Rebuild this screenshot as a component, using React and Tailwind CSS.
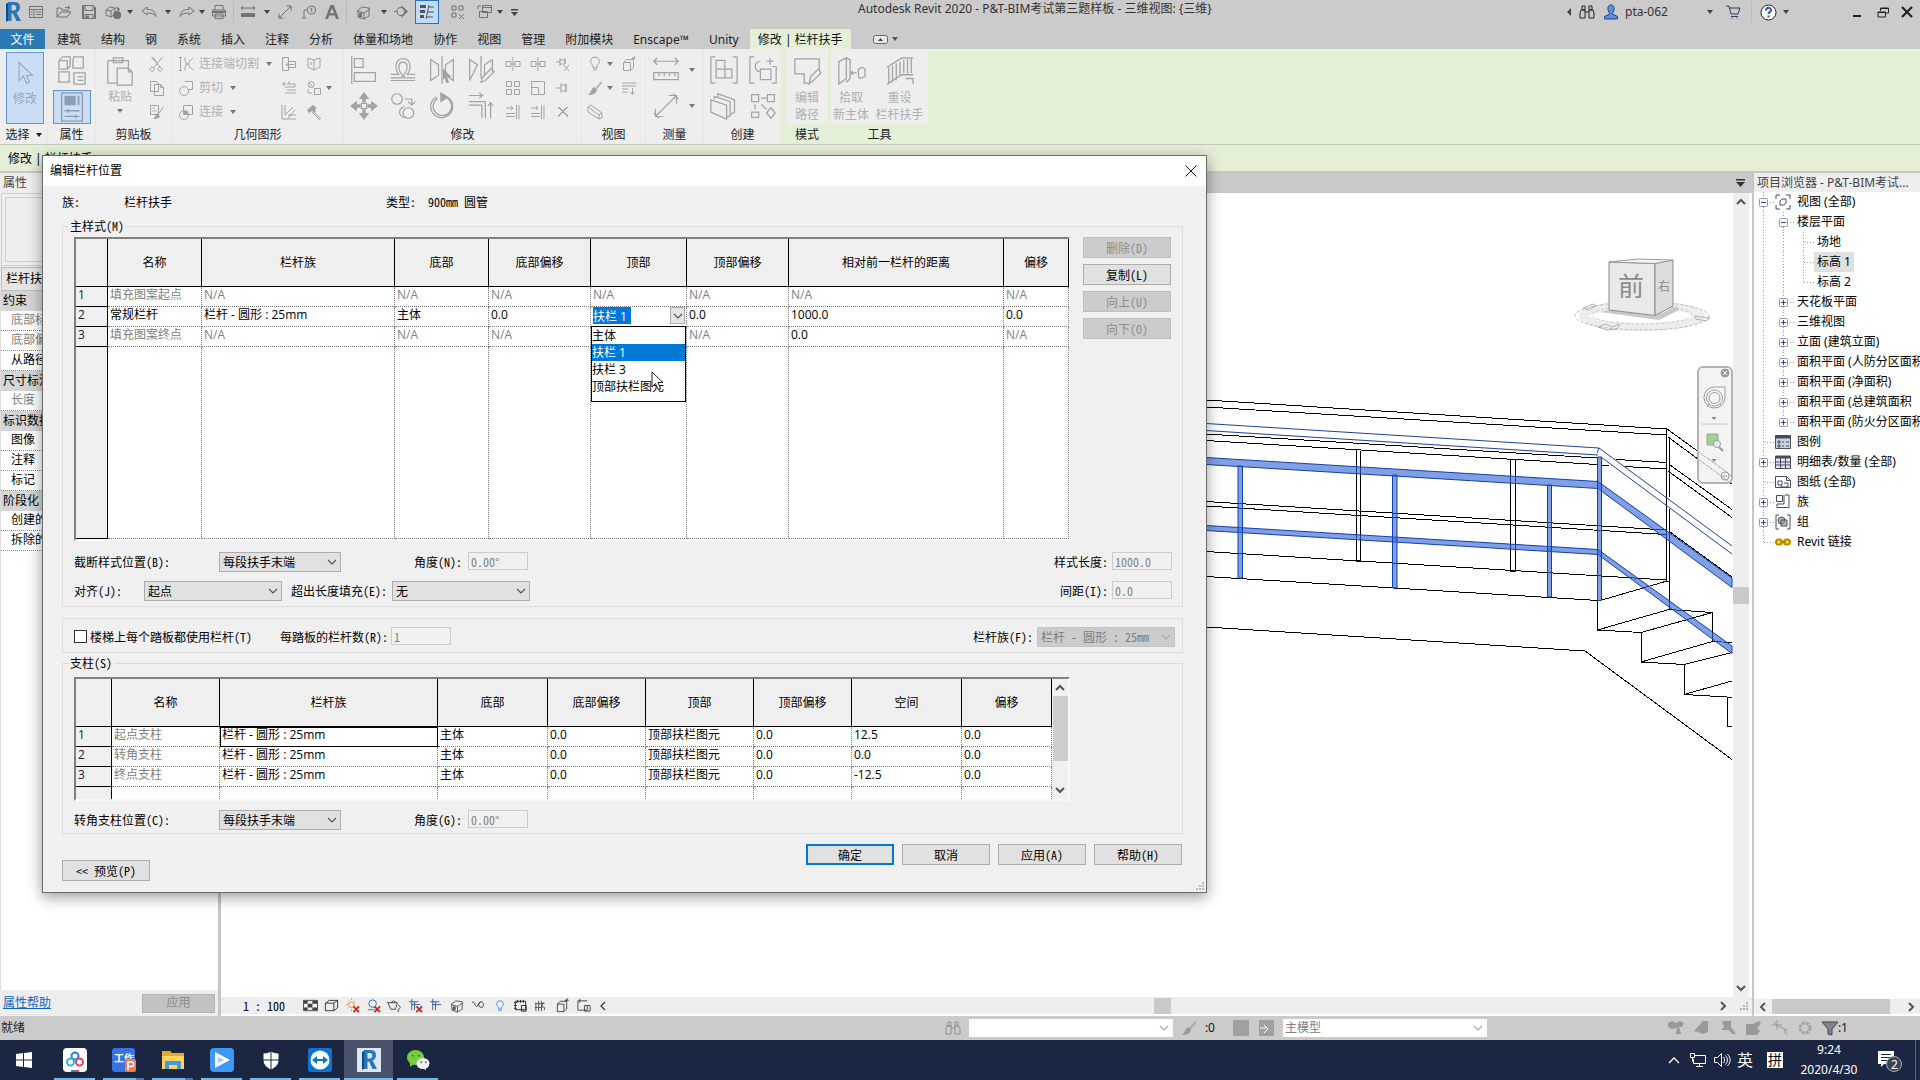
import { useState } from 'react';

// ── Icon outlines, all on a 16px grid: s = stroked, f = filled ───────────────
const ICONS = {
  list:     { s: 'M1.5 2.5h13v11h-13zM1.5 5.5h13M6 5.5v8M8 8h5M8 10.5h5M3 8h1.5M3 10.5h1.5' },
  open:     { s: 'M1 13V4h4l1 2h6v2M1 13l4-5h10l-4 5zM9 3.500h4M12 2l2 1.500L12 5' },
  save:     { s: 'M1.500 1.500h11l2 2v11h-13zM4 1.500v5h8v-5M4 14.500v-4h8v4M1.500 1.500v13M2.500 2v12M13.500 3v11', f: 'M5 11.500h3v3H5z' },
  sync:     { s: 'M1 6l4-3 5 1v6l-4 3-5-2zM1 6l5 1 4-3M6 7v6', f: 'M12 7a4 4 0 1 0 .1 8 4 4 0 0 0 0-8zM11 2l4 3-2 3z' },
  undo:     { s: 'M1 7l5-4v2.500c5 0 8 1 9 7-2-3-5-3.500-9-3.500V11z' },
  redo:     { s: 'M15 7l-5-4v2.500c-5 0-8 1-9 7 2-3 5-3.500 9-3.500V11z' },
  print:    { s: 'M4 6V1.500h8V6M1.500 6h13v6h-13zM4 10h8v4.500H4z', f: 'M2 7h12v2H2z' },
  measure:  { s: 'M1 4h14M3 2L1 4l2 2M13 2l2 2-2 2', f: 'M1 9h14v4H1z' },
  diag:     { s: 'M2 14L14 2M9.500 2H14v4.500M2 9.500V14h4.500M1 12l3 3M12 1l3 3' },
  tag:      { s: 'M10.500 2a4 4 0 1 0 .1 8 4 4 0 0 0 0-8zM9.500 5l1.200-1v4M6.500 6H3v8M1 14h4' },
  textA:    { f: 'M6.500 1h3.200L15 15h-3l-1.200-3.500H5.200L4 15H1zM8 4l-2 5.200h4z' },
  house:    { s: 'M1 7l5-4 7 1v8l-5 3-6-2V7M1 7l7 2 6-4M8 9v6', f: 'M3 9h3v4H3z' },
  section:  { s: 'M8 3.500a4 4 0 1 0 .1 8 4 4 0 0 0 0-8zM1 7.500h3', f: 'M8 1l7 6.500L8 14l1-3c3-2 3-5 0-7z' },
  thin:     { s: 'M10 1L7 15M10 3h5M9 8h6M8 13h6', f: 'M1 1h6v3H1zM1 6h5v3H1zM1 11h4v3H1z' },
  closeWin: { s: 'M2 2h4v4H2zM9 2h4v4H9zM2 9h4v4H2zM9 10l5 5M14 10l-5 5' },
  switchWin:{ s: 'M5.500 1.500h9v7h-9zM5.500 3.500h9M2.500 7.500h8v6h-8zM1 5V2h3' },
  pointer:  { s: 'M4 1v12l3-3 2 5 2-1-2-4.500h4z' },
  cut:      { s: 'M2.500 1l9 11M13.500 1l-9 11M3.500 1l4.500 5.500M4 11.500a2 2 0 1 0 .1 3.500 2 2 0 0 0 0-3.500M12 11.500a2 2 0 1 0 .1 3.500 2 2 0 0 0 0-3.500' },
  copy:     { s: 'M1.500 1.500h6l2 2v8h-8zM5.500 4.500h6l3 3v8h-9zM11.500 4.500v3h3' },
  brush:    { s: 'M1.500 1.500h8v9h-8zM3.500 4h2M3.500 7h4M14.500 3L10 9', f: 'M8 9l3 3c-1 3-4 3-7 3 2-1 2-4 4-6z' },
  paintbrush:{ s: 'M14.500 1.500L8 9M15 2.500L9 9.500', f: 'M7 7l3 3c-1 4-5 5-9 5 3-2 3-6 6-8z' },
  cope:     { s: 'M1 1.500h3M1 14.500h3M2.500 1.500v13M7 1.500v4l3 2.500-3 2.500v4M15 2L9 8l6 6M12 8h-5' },
  joinCut:  { s: 'M6.500 1.500h8v8h-4M6 6.500a4.500 4.500 0 1 0 .1 9 4.500 4.500 0 0 0 0-9z' },
  join:     { s: 'M5.500 1.500h9v9h-9zM6 6.500a4.500 4.500 0 1 0 .1 9 4.500 4.500 0 0 0 0-9z', f: 'M6 7h4v4H6z' },
  wallOpen: { s: 'M1.500 1.500h6v13h-6zM7.500 5.500h7v6h-7M13 8.500H5l2-2M5 8.500l2 2' },
  box:      { s: 'M2 2l6 2v10l-6-3zM8 4l6-2v9l-6 3M5 6v3' },
  beam:     { s: 'M1 4h4M3 2v4M6 4h8v3H4M6 10h9M4 13h11M8 1v3' },
  swap:     { s: 'M5 1.500a3 3 0 1 0 .1 6 3 3 0 0 0 0-6zM3 3l4 4M8.500 8.500h6v6h-6zM2 9v4h4' },
  sawtooth: { s: 'M1 1v14h14M4 1v10l8-8M7 11h8M7 14L14 6' },
  hammer:   { s: 'M7 7l8 8M6 8l8 8', f: 'M1 6l6-5 4 3-2 1 1 2-2 2-2-2-3 2z' },
  align:    { s: 'M1 0v16M2.500 1.500h5v5h-5zM2.500 9.500h12v5h-12z' },
  offset:   { s: 'M1 14h14M1 10.500h4.500C3 7 3.500 1.500 8 1.500s5 5.500 2.500 9H15M1 12.500h6.500v-2C5 8 5 3.500 8 3.500s3 4.500.5 7v2H15' },
  mirror:   { s: 'M1.500 2v12L6 11V5zM14.500 2v12L10 11V5zM8 0v16', f: 'M8.500 7l5 5H11l1 3-1.500.5-1-3-1 1.500z' },
  mirrorDraw:{ s: 'M1.500 2v12L6 5zM14.500 2v7M14.500 2L10 5v6M8 0v13M8 15l1-3 5-5 1.500 2-5 5z' },
  moveX:    { s: 'M6.500 6.500h3v3h-3z', f: 'M8 0l3 4H9v2H7V4H5zM8 16l3-4H9v-2H7v2H5zM0 8l4-3v2h2v2H4v2zM16 8l-4-3v2h-2v2h2v2z' },
  copyO:    { s: 'M4.500 1a3 3 0 1 0 .1 6 3 3 0 0 0 0-6zM11 9a3 3 0 1 0 .1 6 3 3 0 0 0 0-6zM9 4h4v3M11 5.500l2 2 2-2M9 8.500a3 3 0 1 0 .1 6' },
  rotate:   { s: 'M5 2.700A6.300 6.300 0 1 0 11.500 3.200M5.500 3.600a5.300 5.300 0 1 0 5.500 0', f: 'M7 0l5 3-5 3z' },
  trim:     { s: 'M1 2h8M7 .5L9 2 7 3.500M1 5.500h9.500V15M1 7.500h7.500V15M13.500 15V6M12 8l1.500-2L15 8' },
  split:    { s: 'M1 5.500h5v5H1zM10 5.500h5v5h-5zM8 1v14M6 8h4' },
  array:    { s: 'M1.500 1.500h5v5h-5zM9.500 1.500h5v5h-5zM1.500 9.500h5v5h-5zM9.500 9.500h5v5h-5z' },
  scale:    { s: 'M1.500 1.500h13v13h-13zM1.500 7.500h7v7' },
  pin:      { s: 'M1 8h5M6 3.500v9M6 5h5v6H6M11 3.500v9' },
  unpin:    { s: 'M1 6h4M5 2v8M5 4h5v4H5M10 2v6M9 9l5 6M14 9l-5 6' },
  trimOne:  { s: 'M1 4h7M6 2l2 2-2 2M1 9.500h9M1 12.500h9M11.500 1v14M14 1v14' },
  x:        { s: 'M3 3l10 10M13 3L3 13M4 3l9 9M3 12l9-9' },
  bulb:     { s: 'M8 1a4.500 4.500 0 0 0-2 8.500V12h4V9.500A4.500 4.500 0 0 0 8 1zM6 14h4' },
  explode:  { s: 'M2.500 6.500h7v8h-7zM2.500 6.500l3-3h7v8l-3 3M12 1v3M10.500 2.500h4M14 0l-3 4' },
  lines:    { s: 'M1 3h14M1 6h14M1 9h6M1 12h6M11.500 8v6M9.500 12l2 2.500 2-2.500' },
  slab:     { s: 'M1 3l3-2 11 8v5l-3 1L1 8zM1 3l11 8v4M12 11l3-2' },
  dims:     { s: 'M1 3h14M3 1L1 3l2 2M13 1l2 2-2 2M1 9.500h14v4H1zM4 9.500v2M7 9.500v2M10 9.500v2M13 9.500v2' },
  group:    { s: 'M3 .5H.5v15H3M13 .5h2.500v15H13M3.500 2.500h5v5h4v5h-9zM3.500 7.500h5v5' },
  assembly: { s: 'M3 .5H.5v15H3M13 6h2.500v9.500H13M6.500 3a3 3 0 1 0 .1 6M6.500 7.500h6v6h-6zM12 1v4M10 3h4' },
  parts:    { s: 'M.5 4.500l9 3v8l-9-4zM2.500 4V2.500l9 3v8l-2 1M4.500 3V1l9.500 3.500v7l-2.500 1.500' },
  similar:  { s: 'M1.500 1.500h4v4h-4zM10.500 1.500h4v4h-4zM1.500 11.500h4v3h-4zM7 3.500h3M3.500 7v3M7 7l3 3M12.500 9l2.500 3-2.500 3-2.500-3z' },
  editPath: { s: 'M1.500 1.500h13v6M1.500 1.500v8h5v5h2M9 15l1-4 4-4 1.500 2-4 4z' },
  pickHost: { s: 'M1.500 3l4-2v11l-4 3zM5.500 1l2 1v10l-2 2M14 6l1.500 1v4l-2.500 1-1-1V7zM11 9H8l1-1M8 9l1 1' },
  railing:  { s: 'M1 6l8-5h6M2 6v9M4 5v9M6 4v9M8 3v8M10 2v7M12 1.500v8M14 1v8M1 15l8-5h6M11 12h4v3' },
  wall:     { s: 'M1 3l2-2h4v5L5.500 7.500H1zM1 3h4.500v4.500M9 1h5v6H8.500V3zM1 9h5.500v5.500H1zM9 9.500h6v6H9zM11 11.500h3M11 13.500h3' },
  props:    { s: 'M2.500.5h11v15h-11zM4 10h8M4 13h8M6 9v2M10 12v2', f: 'M4 2h6v5H4zM11 2h1v5h-1z' },
  clipboard:{ s: 'M1.500 2.500h11V6M1.500 2.500v12h5M4.500 1h5v2.500h-5zM6.500 6.500h6l2 2v7h-8zM12.500 6.500v2h2' },
  cube:     { s: 'M1.500 5.500h9v8h-9zM1.500 5.500l4-3h9l-4 3M14.500 2.500v8l-4 3' },
  sun:      { s: 'M7 4a3 3 0 1 0 .1 6 3 3 0 0 0 0-6M7 0v2M1 7h2M3 3l1 1M3 11l1-1M11 3l-1 1M7 12v2' },
  shadow:   { s: 'M7 2a4 4 0 1 0 .1 8 4 4 0 0 0 0-8M2 12.500h7' },
  teapot:   { s: 'M1 5l3 7h5l2-7zM4 5l3-2 3 2M1 5H0M12 8a2 2 0 1 1 0 4v3' },
  crop:     { s: 'M1 4h10M4 1v12M7 4v9M4 7h9' },
  glasses:  { s: 'M1 5c3-3 3 4 5 4s2-5 5-5 3 6 0 6-4-4-1-6' },
  region:   { s: 'M2.500 3.500h11v9h-11z M1 5h3M1 8h3M1 11h3M5 2v3M8 2v3M11 2v3M9 8h5v6H9z' },
  grid:     { s: 'M2 5v9M5 3v11M8 3v11M1 6h10M1 10h8M11 5a2 2 0 1 0 .1 5v3' },
  square:   { s: 'M2 3h10M2 3v10h10M4 1v4M12 8v5M9 8h6v6H9z' },
  checker:  { s: 'M.5 2.500h15v11H.5z', f: 'M1 3h4v3H1zM10 3h5v3h-5zM5 6h5v4H5zM1 10h4v3H1zM10 10h5v3h-5z' },
  bino:     { s: 'M2 6h4v8H1V9zM10 6h4l1 3v5h-5zM6 8h4M3 2h3v4H3zM10 2h3v4h-3z' },
  cart:     { s: 'M1 2h3l2 8h7l2-6H5M6 12.500h7M7 13.500v1M12 13.500v1' },
};

function Icon({ name, size = 16, className = 'text-[#a3a3a3]', off = false }) {
  const { s, f } = ICONS[name];
  return (
    <svg width={size} height={size} viewBox="0 0 16 16" className={`shrink-0 ${className}`} aria-hidden="true">
      {f && <path d={f} fill="currentColor" fillRule="evenodd" />}
      {s && <path d={s} fill="none" stroke="currentColor" strokeWidth={size > 20 ? 0.7 : 1} />}
      {off && <path d="M9 9l6 6M15 9l-6 6" stroke="#c8281e" strokeWidth="2" />}
    </svg>
  );
}

function Caret({ className = 'text-[#555]' }) {
  return (
    <svg width="6" height="4" viewBox="0 0 6 4" className={`shrink-0 ${className}`} aria-hidden="true">
      <path d="M0 0h6L3 4z" fill="currentColor" />
    </svg>
  );
}

function Chevron({ dir = 'down', className = 'text-[#555]', bold = false }) {
  const d = { down: 'M1 3l4 4 4-4', up: 'M1 7l4-4 4 4', left: 'M7 1L3 5l4 4', right: 'M3 1l4 4-4 4' }[dir];
  return (
    <svg width="10" height="10" viewBox="0 0 10 10" className={`shrink-0 ${className}`} aria-hidden="true">
      <path d={d} fill="none" stroke="currentColor" strokeWidth={bold ? 2 : 1.2} />
    </svg>
  );
}

function RevitLogo({ className = 'w-4 h-5' }) {
  return (
    <svg viewBox="0 0 16 20" className={className} aria-label="Revit">
      <path d="M1 2l3-2v18l-3 2z" fill="#134a86" />
      <path fillRule="evenodd" d="M3 0h7c4 0 5 3 5 5.500 0 3-2 4.500-3.500 5L16 19h-4.500L8 11.500H6.500V19H3zM6.500 3v5.500H9c3 0 3-5.500 0-5.500z" fill="#2b76b9" />
    </svg>
  );
}

// ── Title bar ────────────────────────────────────────────────────────────────
function Tool({ name, w = 'w-6', size = 16 }) {
  return (
    <button aria-label={name} className={`${w} h-6 flex items-center justify-center`}>
      <Icon name={name} size={size} className="text-[#737373]" />
    </button>
  );
}

function TitleBar() {
  return (
    <header className="h-[29px] bg-[#cbcbcb] flex items-start justify-between relative">
      <div className="flex items-center h-6 pl-[5px]">
        <RevitLogo />
        <Tool name="list" w="w-[30px]" />
        <Tool name="open" w="w-[26px]" />
        <Tool name="save" />
        <Tool name="sync" />
        <Caret className="ml-0.5 mr-1 text-[#444]" />
        <Tool name="undo" />
        <Caret className="mx-1 text-[#444]" />
        <Tool name="redo" />
        <Caret className="text-[#444]" />
        <Tool name="print" w="w-7" />
        <span className="w-px h-5 bg-[#b8b8b8]" />
        <Tool name="measure" w="w-7" />
        <Caret className="ml-0.5 text-[#444]" />
        <Tool name="diag" w="w-[30px]" />
        <Tool name="tag" w="w-[18px]" />
        <Tool name="textA" w="w-7" />
        <span className="w-px h-5 bg-[#b8b8b8]" />
        <Tool name="house" w="w-[34px]" />
        <Caret className="text-[#444]" />
        <Tool name="section" w="w-7" />
        <button aria-label="细线" className="w-6 h-6 border border-[#2f6fc0] bg-[#c2dcf7] flex items-center justify-center">
          <Icon name="thin" className="text-[#555]" />
        </button>
        <Tool name="closeWin" w="w-[38px]" />
        <Tool name="switchWin" w="w-4" />
        <Caret className="ml-1 mr-2 text-[#444]" />
        <svg width="7" height="7" viewBox="0 0 7 7"><path d="M0 0h7v1.500H0zM0 3h7L3.500 7z" fill="#444" /></svg>
      </div>
      <div className="absolute left-1/2 top-0 -ml-[102px] leading-[18px] whitespace-nowrap text-[#333]">
        Autodesk Revit 2020 - P&amp;T-BIM考试第三题样板 - 三维视图: {'{三维}'}
      </div>
      <div className="flex items-center h-6 text-[#444]">
        <svg width="4" height="8" viewBox="0 0 4 8" className="mr-2"><path d="M4 0v8L0 4z" fill="#444" /></svg>
        <Icon name="bino" className="text-[#222] mr-2" />
        <svg width="16" height="16" viewBox="0 0 16 16" className="mr-1.5">
          <path d="M8 1c2.500 0 3.500 2 3 4.500S9.500 9 9.500 10l5 2.500V15h-13v-2.500l5-2.500c0-1-1-2-1.500-4.500S5.500 1 8 1z" fill="#5d8fe0" stroke="#27457f" />
        </svg>
        <span className="w-[82px] text-[#333]">pta-062</span>
        <Caret className="mr-3" />
        <Icon name="cart" className="text-[#2b3d66] mr-2.5" />
        <span className="w-px h-5 bg-[#bbb] mr-2" />
        <svg width="17" height="17" viewBox="0 0 17 17" className="mr-1.5">
          <circle cx="8.500" cy="8.500" r="7.500" fill="#fff" stroke="#222" />
          <path d="M6 6.500c0-4 5.500-3 5 0-.3 1.500-2.500 1.500-2.500 3.500M8.500 11.500v2" fill="none" stroke="#2957b5" strokeWidth="2" />
        </svg>
        <Caret className="mr-[63px]" />
        <button aria-label="最小化" className="w-[25px] h-6 flex items-center">
          <svg width="10" height="10" viewBox="0 0 10 10"><path d="M1 9h8" stroke="#222" strokeWidth="2" /></svg>
        </button>
        <button aria-label="还原" className="w-6 h-6 flex items-center">
          <svg width="12" height="11" viewBox="0 0 12 11"><path d="M3.500 4V1h8v5H9M1 5h7.500v5H1zM1 5.500h7.500M3.500 1.500h8" fill="none" stroke="#222" /></svg>
        </button>
        <button aria-label="关闭" className="w-[19px] h-6 flex items-center">
          <svg width="12" height="12" viewBox="0 0 12 12"><path d="M1 1l10 10M11 1L1 11" stroke="#222" strokeWidth="2.200" /></svg>
        </button>
      </div>
    </header>
  );
}

// ── Ribbon ───────────────────────────────────────────────────────────────────
const TABS = ['建筑', '结构', '钢', '系统', '插入', '注释', '分析', '体量和场地', '协作', '视图', '管理', '附加模块', 'Enscape™', 'Unity'];

function TabRow() {
  return (
    <nav className="h-5 bg-[#cbcbcb] flex items-stretch leading-[22px] text-[#222]">
      <button className="w-[45px] bg-[#2a7ab5] text-white mr-0.5">文件</button>
      {TABS.map(t => <button key={t} className="px-2.5 whitespace-nowrap">{t}</button>)}
      <button className="w-[101px] bg-[#e4efd7] text-[#111] whitespace-nowrap ml-px">修改 | 栏杆扶手</button>
      <button aria-label="最小化功能区" className="ml-[22px] flex items-center gap-1">
        <svg width="15" height="9" viewBox="0 0 15 9"><rect x=".5" y=".5" width="14" height="8" rx="2" fill="#e8e8e8" stroke="#666" /><path d="M5 6l2.500-3L10 6z" fill="#444" /></svg>
        <Caret />
      </button>
    </nav>
  );
}

function Panel({ title, w, green = false, children }) {
  return (
    <section className={`${w} h-full flex flex-col shrink-0 ${green ? '' : 'bg-[#eeeeee] border-r border-[#e6e9e2]'}`}>
      <div className={`h-[75px] pt-[3px] flex ${green ? 'bg-[#eeeeee]' : ''}`}>{children}</div>
      <h2 className="flex-1 text-center leading-[22px] text-[#222] whitespace-nowrap">{title}</h2>
    </section>
  );
}

function Stack({ names, w = 'w-[25px]' }) {
  return (
    <div className={`${w} shrink-0 grid grid-rows-3`}>
      {names.map((n, i) => n
        ? <button key={i} disabled aria-label={n} className="h-6 flex items-center justify-center"><Icon name={n} /></button>
        : <span key={i} />)}
    </div>
  );
}

function Pair({ names, w = 'w-[39px]' }) {
  return (
    <div className={`${w} shrink-0 grid grid-rows-2`}>
      {names.map(n => (
        <button key={n} disabled aria-label={n} className="h-9 flex items-center justify-center"><Icon name={n} size={28} /></button>
      ))}
    </div>
  );
}

function BigButton({ name, lines, w }) {
  return (
    <button disabled className={`${w} h-[72px] pt-1 flex flex-col items-center text-[#b0b0b0] leading-[17px] whitespace-nowrap`}>
      <Icon name={name} size={30} className="mb-[3px] text-[#a3a3a3]" />
      {lines.map(l => <span key={l}>{l}</span>)}
    </button>
  );
}

function Ribbon() {
  return (
    <div className="h-24 bg-[#e4efd7] border-b border-[#c3cbbb] flex items-stretch">
      <Panel w="w-12" title={<span className="inline-flex items-center gap-1.5">选择<Caret className="text-[#222]" /></span>}>
        <button className="ml-1.5 w-[38px] h-[72px] border border-[#6495d3] bg-[#c9def5] flex flex-col items-center pt-2 gap-1.5 text-[#9aa6b5]">
          <Icon name="pointer" size={24} className="text-[#96a3b5]" />
          修改
        </button>
      </Panel>
      <Panel w="w-12" title="属性">
        <div className="w-full flex flex-col items-center gap-0.5">
          <button disabled aria-label="类型属性" className="h-9 flex items-center"><Icon name="wall" size={30} /></button>
          <button aria-label="属性" className="w-[38px] h-[34px] border border-[#6495d3] bg-[#c9def5] flex items-center justify-center">
            <Icon name="props" size={30} className="text-[#8d9cb0]" />
          </button>
        </div>
      </Panel>
      <Panel w="w-[76px]" title="剪贴板">
        <button disabled className="w-12 pt-1 flex flex-col items-center text-[#b0b0b0] leading-[17px]">
          <Icon name="clipboard" size={30} className="mb-0.5 text-[#a3a3a3]" />
          粘贴
          <Caret className="mt-1 text-[#777]" />
        </button>
        <Stack names={['cut', 'copy', 'brush']} />
      </Panel>
      <Panel w="w-[172px]" title="几何图形">
        <div className="w-[104px] grid grid-rows-3 text-[#b0b0b0]">
          {[['cope', '连接端切割'], ['joinCut', '剪切'], ['join', '连接']].map(([icon, text]) => (
            <button key={text} disabled className="h-6 pl-1.5 flex items-center gap-[5px] whitespace-nowrap">
              <Icon name={icon} />{text}<Caret className="ml-0.5 text-[#777]" />
            </button>
          ))}
        </div>
        <Stack names={['wallOpen', 'beam', 'sawtooth']} />
        <Stack names={['box', 'swap', 'hammer']} />
        <Caret className="mt-[34px] text-[#777]" />
      </Panel>
      <Panel w="w-[238px]" title="修改">
        <Pair names={['align', 'moveX']} />
        <Pair names={['offset', 'copyO']} />
        <Pair names={['mirror', 'rotate']} />
        <Pair names={['mirrorDraw', 'trim']} />
        <Stack names={['split', 'array', 'trimOne']} />
        <Stack names={['split', 'scale', 'trimOne']} />
        <Stack names={['unpin', 'pin', 'x']} />
      </Panel>
      <Panel w="w-16" title="视图">
        <Stack names={['bulb', 'paintbrush', 'slab']} />
        <div className="w-2 grid grid-rows-3 items-center justify-items-center">
          <Caret className="text-[#777]" /><Caret className="text-[#777]" />
        </div>
        <Stack names={['explode', 'lines', null]} w="w-8" />
      </Panel>
      <Panel w="w-[58px]" title="测量">
        <Pair names={['dims', 'diag']} />
        <div className="ml-1 grid grid-rows-2 items-center"><Caret className="text-[#777]" /><Caret className="text-[#777]" /></div>
      </Panel>
      <Panel w="w-[78px]" title="创建">
        <Pair names={['group', 'parts']} />
        <Pair names={['assembly', 'similar']} />
      </Panel>
      <div className="w-1" />
      <Panel w="w-[42px]" green title="模式">
        <BigButton name="editPath" lines={['编辑', '路径']} w="w-[42px]" />
      </Panel>
      <div className="w-[3px]" />
      <Panel w="w-[97px]" green title="工具">
        <BigButton name="pickHost" lines={['拾取', '新主体']} w="w-10" />
        <BigButton name="railing" lines={['重设', '栏杆扶手']} w="w-[57px]" />
      </Panel>
    </div>
  );
}

// ── Properties palette ───────────────────────────────────────────────────────
const PROPS = [
  { group: '约束' },
  { name: '底部标高', dim: true },
  { name: '底部偏移', dim: true },
  { name: '从路径偏移' },
  { group: '尺寸标注' },
  { name: '长度', dim: true },
  { group: '标识数据' },
  { name: '图像' },
  { name: '注释' },
  { name: '标记' },
  { group: '阶段化' },
  { name: '创建的阶段' },
  { name: '拆除的阶段' },
];

function Properties() {
  return (
    <aside className="w-[218px] shrink-0 flex flex-col bg-[#eeeeee]">
      <h2 className="h-[19px] pl-[3px] leading-[19px] text-[#444]">属性</h2>
      <div className="h-[73px] m-px p-[3px] border border-[#cfcfcf]">
        <div className="h-full border border-[#cfcfcf]" />
      </div>
      <button className="h-6 ml-px pl-1 border border-[#bcbcbc] bg-[#e6e6e6] text-left">栏杆扶手</button>
      <div className="flex-1 bg-white border-l border-[#ddd] overflow-hidden">
        {PROPS.map(p => p.group
          ? <div key={p.group} className="h-5 pl-0.5 leading-5 bg-[#d5d5d5]">{p.group}</div>
          : <div key={p.name} className={`h-5 pl-2.5 leading-[18px] border-b border-dotted border-[#888] ${p.dim ? 'text-[#808080]' : ''}`}>{p.name}</div>)}
      </div>
      <div className="h-[26px] px-[3px] flex items-center justify-between">
        <a href="#help" className="text-[#1064c4] underline">属性帮助</a>
        <button disabled className="w-[73px] h-[19px] border border-[#b4b4b4] bg-[#c2c2c2] text-[#8a8a8a] leading-4">应用</button>
      </div>
    </aside>
  );
}

// ── 3D canvas ────────────────────────────────────────────────────────────────
const BLACK = [
  'M1206 400L1667 429L1732 476M1206 407L1667 435M1668 437L1732 484',
  'M1206 434L1597 458M1616 459.500L1667 462.500M1206 440.500L1597 464.500M1601 465L1609 466M1625 466.500L1666 469',
  'M1670 465L1732 509.500M1668 471L1732 517.500',
  'M1206 501.500L1666 530M1206 506L1666 534.500M1670 532L1732 577',
  'M1206 551.500L1666 580M1206 576.500L1598 600.500M1206 627L1585 651L1732 759.500',
  'M1356.500 450V561.500H1360.500V450.500M1510.500 459.500V571H1515.500V460',
  'M1666.500 429V581H1669.500M1669.500 437V497M1669.500 509V609',
  'M1602 600L1667 581M1597.500 600V630L1669 609.500L1712.500 612.500V641.500L1641 662L1684 664.500V694.500L1727 697V726H1732',
  'M1597.500 630L1641 632.500V662M1641 632.500L1712.500 612.500M1684 664.500L1732 652.500M1712.500 641.500L1732 642.500M1684 694.500L1732 681M1727 697H1732',
];
const BANDS = [
  'M1206 457.500L1598 481.500L1732 578V587.500L1598 488.500L1206 464.500z',
  'M1206 525.500L1598 549.500L1732 646V653.500L1598 554.500L1206 530.500z',
  'M1238 466h4.500v112h-4.500zM1392.500 475h4.500v113h-4.500zM1547.500 485h4v112h-4zM1597.500 457h4v143.500h-4z',
];

function Model() {
  return (
    <svg viewBox="1206 193 527 804" className="w-[527px] h-[804px] shrink-0 ml-auto" role="img" aria-label="三维视图">
      <g fill="none" stroke="#000" shapeRendering="crispEdges">
        {BLACK.map(d => <path key={d} d={d} />)}
      </g>
      <g fill="none" stroke="#1c429e">
        <path d="M1206 423.500L1599 448L1732 546M1206 430.500L1598 455M1601 457L1732 554M1599 448L1597 453" />
      </g>
      <g fill="#3464d4" fillOpacity="0.62" stroke="#1040ac">
        {BANDS.map(d => <path key={d} d={d} />)}
      </g>
      {/* view cube */}
      <ellipse cx="1642" cy="316" rx="59" ry="11" fill="none" stroke="#ededed" strokeWidth="8" />
      <ellipse cx="1642" cy="316" rx="67" ry="14" fill="none" stroke="#bbb" strokeDasharray="3 2" />
      <ellipse cx="1642" cy="315" rx="50" ry="9" fill="none" stroke="#ccc" strokeDasharray="3 2" />
      <path d="M1598 327l8-3 6 3 8-3-3 5-10 1zM1583 308l10-4 3 2-8 4zM1694 316l16 2-4 3-10-2z" fill="none" stroke="#b0b0b0" />
      <path d="M1600 312l10-2 45 6 22-10 2 4-20 10z" fill="#c8c8c8" />
      <path d="M1609 262l46 1.500v52l-46-5.500z" fill="#e9e9e9" stroke="#8a8a8a" />
      <path d="M1655 263.500l18-3.500v46l-18 9.500z" fill="#dcdcdc" stroke="#8a8a8a" />
      <path d="M1609 262l29-3 35 1-18 3.500z" fill="#f4f4f4" stroke="#9a9a9a" />
      <text x="1618" y="296" fontSize="26" fill="#8c8c8c">前</text>
      <text x="1658" y="291" fontSize="12" fill="#8c8c8c">右</text>
    </svg>
  );
}

function NavBar() {
  return (
    <div className="absolute right-0 top-[173px] w-9 h-[118px] rounded-md border-2 border-[#b4b4b4] bg-[#f0f0f0]/80 flex flex-col items-center">
      <svg width="36" height="118" viewBox="0 0 36 118" className="-m-0.5 shrink-0" fill="none" stroke="#9a9a9a">
        <circle cx="28" cy="7" r="4" fill="#9a9a9a" />
        <path d="M26 5l4 4M30 5l-4 4" stroke="#fff" />
        <path d="M28 21v11a10.500 10.500 0 1 1-10.500-11z" fill="#f6f6f6" />
        <circle cx="17.500" cy="32" r="8" /><circle cx="17.500" cy="32" r="5.500" />
        <path d="M12 38l-2 3M23 38l2 2" />
        <path d="M14.500 51h5l-2.500 3zM14.500 93h5l-2.500 3z" fill="#888" stroke="none" />
        <path d="M5 58h26" stroke="#c4c4c4" />
        <path d="M10 68h11v11H10z" fill="#a6cf9a" stroke="#8ab47e" />
        <circle cx="20" cy="78" r="3.500" fill="#eee" /><path d="M22 81l4 4" strokeWidth="2" />
        <circle cx="28" cy="110" r="4" /><path d="M26 110h4" />
      </svg>
    </div>
  );
}

const VIEW_ICONS = [
  { name: 'checker', color: 'text-[#444]' },
  { name: 'cube', color: 'text-[#333]' },
  { name: 'sun', color: 'text-[#d99a10]', off: true },
  { name: 'shadow', color: 'text-[#2f6fc0]', off: true },
  { name: 'teapot', color: 'text-[#445]' },
  { name: 'crop', color: 'text-[#2f5f9f]', off: true },
  { name: 'crop', color: 'text-[#2f5f9f]' },
  { name: 'house', color: 'text-[#555]' },
  { name: 'glasses', color: 'text-[#333]' },
  { name: 'bulb', color: 'text-[#2f78d0]', small: true },
  { name: 'region', color: 'text-[#222]' },
  { name: 'grid', color: 'text-[#5a4a60]' },
  { name: 'explode', color: 'text-[#444]' },
  { name: 'square', color: 'text-[#444]' },
];

function ViewArea() {
  return (
    <main className="flex-1 min-w-0 flex flex-col border-l-[3px] border-[#c6c6c6]">
      <div className="h-5 bg-[#c9c9c9] flex items-center justify-end pr-[7px]">
        <svg width="9" height="8" viewBox="0 0 9 8"><path d="M0 0h9v1.500H0zM0 3h9L4.500 8z" fill="#333" /></svg>
      </div>
      <div className="flex-1 min-h-0 flex bg-white">
        <div className="flex-1 min-w-0 flex relative overflow-hidden">
          <Model />
          <NavBar />
        </div>
        <div className="w-4 mr-[3px] bg-[#eeeeee] flex flex-col items-center justify-between py-1">
          <Chevron dir="up" bold />
          <span className="w-4 h-[17px] bg-[#c9c9c9]" />
          <Chevron bold />
        </div>
      </div>
      <div className="h-[19px] pb-0.5 bg-white">
        <div className="h-[17px] bg-[#eeeeee] flex items-center pl-[22px]">
          <span className="w-[57px] font-['Noto_Sans_Mono_CJK_SC','Liberation_Mono','Noto_Sans_CJK_SC',monospace] whitespace-pre">1 : 100</span>
          {VIEW_ICONS.map((v, i) => (
            <button key={i} aria-label={v.name} className="w-[21px] flex justify-center">
              <Icon name={v.name} size={v.small ? 12 : 15} className={v.color} off={v.off} />
            </button>
          ))}
          <Chevron dir="left" className="ml-1 text-[#333]" />
          <span className="ml-auto mr-[547px] w-[17px] h-4 bg-[#c9c9c9]" />
          <Chevron dir="right" bold />
          <svg width="8" height="8" viewBox="0 0 8 8" className="ml-3 mr-1"><path d="M6 0h2v2H6zM3 3h2v2H3zM6 3h2v2H6zM0 6h2v2H0zM3 6h2v2H3zM6 6h2v2H6z" fill="#b4b4b4" /></svg>
        </div>
      </div>
    </main>
  );
}

// ── Project browser ──────────────────────────────────────────────────────────
const TREE = [
  { level: 0, text: '视图 (全部)', box: '-', icon: 'views' },
  { level: 1, text: '楼层平面', box: '-' },
  { level: 2, text: '场地' },
  { level: 2, text: '标高 1', active: true },
  { level: 2, text: '标高 2', last: true },
  { level: 1, text: '天花板平面', box: '+' },
  { level: 1, text: '三维视图', box: '+' },
  { level: 1, text: '立面 (建筑立面)', box: '+' },
  { level: 1, text: '面积平面 (人防分区面积)', box: '+' },
  { level: 1, text: '面积平面 (净面积)', box: '+' },
  { level: 1, text: '面积平面 (总建筑面积', box: '+' },
  { level: 1, text: '面积平面 (防火分区面积)', box: '+', last: true },
  { level: 0, text: '图例', icon: 'legend' },
  { level: 0, text: '明细表/数量 (全部)', box: '+', icon: 'schedule' },
  { level: 0, text: '图纸 (全部)', icon: 'sheet' },
  { level: 0, text: '族', box: '+', icon: 'family' },
  { level: 0, text: '组', box: '+', icon: 'groups' },
  { level: 0, text: 'Revit 链接', icon: 'link', last: true },
];

const TREE_ICONS = {
  views: <path d="M1 5V1h4M11 1h4v4M15 11v4h-4M5 15H1v-4M5 7l2-2h4v4l-2 2H5z" />,
  legend: <><path d="M.5 1.500h15v13H.5z" fill="#ccd3dd" /><path d="M.5 3h15" strokeWidth="3" /><path d="M3 7h2v2H3zM3 11h2v2H3zM7 8h2M7 12h2M11 8h3M11 12h3" /></>,
  schedule: <><path d="M.5 2.500h15v12H.5z" fill="#dfe6ee" /><path d="M.5 3h15" strokeWidth="3" /><path d="M1 8h14M1 11h14M5.500 4v10M10.500 4v10" /></>,
  sheet: <><path d="M.5 2.500h11l4 4v7H.5zM11.500 2.500v4h4" /><path d="M3 7h4v4H3zM9 9h4v4H6v-2" /></>,
  family: <path d="M1.500 1.500h6v6h-6zM10 1h4v12.500H2V10h7V1" />,
  groups: <><path d="M4 1H1v14h3M12 1h3v14h-3" /><circle cx="6.500" cy="6.500" r="3.500" fill="#bbb" /><path d="M6 6h6v6H6z" fill="#999" fillOpacity=".6" /></>,
  link: <g stroke="#b88a00" strokeWidth="2"><rect x="1" y="5.500" width="6" height="5" rx="2.500" fill="#ffd83d" /><rect x="9" y="5.500" width="6" height="5" rx="2.500" fill="#ffd83d" /><path d="M5 8h6" /></g>,
};

function Dots({ box, last, line = true, stub = true }) {
  return (
    <svg width="20" height="20" viewBox="0 0 20 20" className="shrink-0" aria-hidden="true">
      {line && <path d={last ? 'M9.500 0v10' : 'M9.500 0v20'} stroke="#999" strokeDasharray="1 2" />}
      {stub && <path d="M10 10.500h10" stroke="#999" strokeDasharray="1 2" />}
      {box && (
        <>
          <rect x="5.500" y="6.500" width="8" height="8" rx="1" fill="#fff" stroke="#8e98a8" />
          <path d={box === '+' ? 'M7 10.500h5M9.500 8v5' : 'M7 10.500h5'} stroke="#2c478f" />
        </>
      )}
    </svg>
  );
}

function TreeRow({ row }) {
  return (
    <li className="h-5 flex items-center whitespace-nowrap">
      {row.level > 0 && <Dots stub={false} />}
      {row.level > 1 && <Dots stub={false} />}
      <Dots box={row.box} last={row.last} />
      {row.icon && (
        <svg width="16" height="16" viewBox="0 0 16 16" className="shrink-0 ml-px" fill="none" stroke="#444d5c">{TREE_ICONS[row.icon]}</svg>
      )}
      <span className={row.active ? 'bg-[#e0e0e0] px-[3px] leading-5' : row.level === 0 ? 'pl-1.5' : 'pl-[3px]'}>{row.text}</span>
    </li>
  );
}

function Browser() {
  return (
    <aside className="w-[168px] shrink-0 flex flex-col border-l-2 border-[#c6c6c6] bg-white">
      <h2 className="h-[19px] pl-[3px] bg-[#eeeeee] text-[#444] leading-[19px] whitespace-nowrap overflow-hidden">项目浏览器 - P&amp;T-BIM考试...</h2>
      <ul className="flex-1 overflow-hidden">
        {TREE.map(r => <TreeRow key={r.text} row={r} />)}
      </ul>
      <div className="h-[15px] mb-0.5 bg-[#eeeeee] flex items-center px-1">
        <Chevron dir="left" bold />
        <span className="w-[118px] h-[15px] ml-1 mr-auto bg-[#c9c9c9]" />
        <Chevron dir="right" bold />
      </div>
    </aside>
  );
}

// ── Dialog: edit baluster placement ──────────────────────────────────────────
function Combo({ id, value, w, disabled = false }) {
  return (
    <div className={`${w} relative shrink-0`}>
      <select
        id={id}
        disabled={disabled}
        defaultValue={value}
        className={`appearance-none w-full h-5 pl-[3px] border text-left leading-[18px] opacity-100 ${disabled ? 'bg-[#cccccc] border-[#c4c4c4] text-[#7d7d7d]' : 'bg-[#e1e1e1] border-[#adadad] text-black'}`}
      >
        <option>{value}</option>
      </select>
      <span className="absolute right-1 top-[5px] pointer-events-none">
        <Chevron className={disabled ? 'text-[#aaa]' : 'text-[#555]'} />
      </span>
    </div>
  );
}

function Field({ id, value }) {
  return <input id={id} defaultValue={value} disabled className="w-[60px] h-[18px] px-0.5 border border-[#cccccc] bg-[#f0f0f0] text-[#808080] shrink-0" />;
}

function PushButton({ children, primary = false, disabled = false, className = '' }) {
  const look = disabled
    ? 'bg-[#cccccc] border border-[#bfbfbf] text-[#8c8c8c]'
    : primary ? 'bg-[#e1e1e1] border-2 border-[#0078d7]' : 'bg-[#e1e1e1] border border-[#adadad]';
  return <button disabled={disabled} className={`w-[88px] h-[21px] flex items-center justify-center shrink-0 ${look} ${className}`}>{children}</button>;
}

function HeadRow({ titles }) {
  return (
    <thead>
      <tr className="h-12">
        <th className="border-r border-b border-black bg-[#efefef]" />
        {titles.map((t, i) => <th key={i} className="border-r border-b border-black bg-[#efefef] font-normal text-center">{t}</th>)}
      </tr>
    </thead>
  );
}

const NUM_CELL = 'border-r border-b border-black bg-[#efefef] pl-0.5 align-top leading-4 text-[#222]';
const CELL = 'border-r border-b border-dotted border-[#777] pl-0.5 align-top leading-4 whitespace-nowrap';

function TopPicker() {
  const [value, setValue] = useState('扶栏 1');
  return (
    <div className="relative flex items-center justify-between pr-px">
      <input aria-label="顶部" value={value} onChange={e => setValue(e.target.value)} className="w-[38px] h-[17px] bg-[#0078d7] text-white" />
      <button aria-label="展开" className="w-[15px] h-[17px] border border-[#adadad] bg-[#e5e5e5] flex items-center justify-center"><Chevron /></button>
      <ul role="listbox" className="absolute -left-0.5 top-[19px] z-10 w-[95px] h-[76px] border border-black bg-white">
        {['主体', '扶栏 1', '扶栏 3', '顶部扶栏图元'].map(o => (
          <li
            key={o}
            role="option"
            aria-selected={o === value}
            onClick={() => setValue(o)}
            className={`h-[17px] leading-[17px] whitespace-nowrap ${o === value ? 'bg-[#0078d7] text-white' : ''}`}
          >
            {o}
          </li>
        ))}
      </ul>
      <svg width="13" height="20" viewBox="0 0 13 20" className="absolute left-[58px] top-[64px] z-20 pointer-events-none">
        <path d="M1 1v15l3.500-3.500L7 18.500l2.500-1-2.500-6h5z" fill="#fff" stroke="#222" />
      </svg>
    </div>
  );
}

const MAIN_ROWS = [
  ['填充图案起点', 'N/A', 'N/A', 'N/A', 'N/A', 'N/A', 'N/A', 'N/A'],
  ['常规栏杆', '栏杆 - 圆形 : 25mm', '主体', '0.0', null, '0.0', '1000.0', '0.0'],
  ['填充图案终点', 'N/A', 'N/A', 'N/A', '', 'N/A', '0.0', 'N/A'],
];

function MainTable() {
  return (
    <div className="w-[996px] h-[304px] border-2 border-t-[#808080] border-l-[#808080] border-r-[#f8f8f8] border-b-[#f8f8f8] bg-white font-['Open_Sans','Noto_Sans_CJK_SC',sans-serif]">
      <table className="table-fixed border-separate border-spacing-0 w-[993px] h-[300px]">
        <colgroup>
          <col className="w-8" /><col className="w-[94px]" /><col className="w-[193px]" /><col className="w-[94px]" />
          <col className="w-[102px]" /><col className="w-24" /><col className="w-[102px]" /><col className="w-[215px]" /><col className="w-[65px]" />
        </colgroup>
        <HeadRow titles={['名称', '栏杆族', '底部', '底部偏移', '顶部', '顶部偏移', '相对前一栏杆的距离', '偏移']} />
        <tbody>
          {MAIN_ROWS.map((cells, r) => (
            <tr key={r} className="h-5">
              <td className={NUM_CELL}>{r + 1}</td>
              {cells.map((c, i) => (
                <td key={i} className={`${CELL} ${c === 'N/A' || (i === 0 && r !== 1) ? 'text-[#808080]' : ''}`}>
                  {c === null ? <TopPicker /> : c}
                </td>
              ))}
            </tr>
          ))}
          <tr>
            <td className={NUM_CELL} />
            {MAIN_ROWS[0].map((_, i) => <td key={i} className={CELL} />)}
          </tr>
        </tbody>
      </table>
    </div>
  );
}

const POST_ROWS = [
  ['起点支柱', '12.5'],
  ['转角支柱', '0.0'],
  ['终点支柱', '-12.5'],
];

function PostTable() {
  return (
    <div className="w-[996px] h-[124px] border-2 border-t-[#808080] border-l-[#808080] border-r-[#f8f8f8] border-b-[#f8f8f8] bg-white overflow-hidden flex justify-between font-['Open_Sans','Noto_Sans_CJK_SC',sans-serif]">
      <table className="table-fixed border-separate border-spacing-0 w-[976px] h-[128px]">
        <colgroup>
          <col className="w-9" /><col className="w-[108px]" /><col className="w-[218px]" /><col className="w-[110px]" />
          <col className="w-[98px]" /><col className="w-[108px]" /><col className="w-[98px]" /><col className="w-[110px]" /><col className="w-[90px]" />
        </colgroup>
        <HeadRow titles={['名称', '栏杆族', '底部', '底部偏移', '顶部', '顶部偏移', '空间', '偏移']} />
        <tbody>
          {POST_ROWS.map(([name, gap], r) => (
            <tr key={name} className="h-5">
              <td className={NUM_CELL}>{r + 1}</td>
              <td className={`${CELL} text-[#808080]`}>{name}</td>
              <td className={`${CELL} ${r === 0 ? 'outline outline-black -outline-offset-1' : ''}`}>栏杆 - 圆形 : 25mm</td>
              <td className={CELL}>主体</td>
              <td className={CELL}>0.0</td>
              <td className={CELL}>顶部扶栏图元</td>
              <td className={CELL}>0.0</td>
              <td className={CELL}>{gap}</td>
              <td className={CELL}>0.0</td>
            </tr>
          ))}
          <tr className="h-5">
            <td className={NUM_CELL} />
            {[...Array(8)].map((_, i) => <td key={i} className={CELL} />)}
          </tr>
        </tbody>
      </table>
      <div className="w-4 bg-[#f0f0f0] flex flex-col items-center py-1">
        <Chevron dir="up" bold />
        <span className="mt-[3px] mb-auto w-[15px] h-[65px] bg-[#cdcdcd]" />
        <Chevron bold />
      </div>
    </div>
  );
}

const GROUP = 'border border-[#dcdcdc] pl-[11px] pr-2.5';

function Dialog() {
  return (
    <div role="dialog" aria-label="编辑栏杆位置" className="absolute left-[42px] top-[155px] w-[1165px] border border-[#6b6b6b] bg-[#f0f0f0] shadow-[0_4px_14px_rgba(0,0,0,0.4)] text-black">
      <div className="h-[30px] bg-white flex items-center justify-between pl-[7px] pr-[9px] font-['Noto_Sans','Noto_Sans_CJK_SC',sans-serif]">
        <h1>编辑栏杆位置</h1>
        <button aria-label="关闭">
          <svg width="12" height="12" viewBox="0 0 12 12"><path d="M.5 .5l11 11M11.500 .5l-11 11" stroke="#111" /></svg>
        </button>
      </div>
      <div className="px-[19px] pb-[11px] relative font-['Noto_Sans_Mono_CJK_SC','Liberation_Mono','Noto_Sans_CJK_SC',monospace]">
        <div className="h-8 flex items-center">
          <span className="w-[62px]">族:</span>
          <span className="w-[262px]">栏杆扶手</span>
          <span className="w-[42px]">类型:</span>
          <span>900mm 圆管</span>
        </div>

        <fieldset className={`${GROUP} pb-[5px] mr-1`}>
          <legend className="-ml-1.5 px-0.5 leading-4">主样式(M)</legend>
          <div className="pt-[3px] flex justify-between">
            <MainTable />
            <div className="w-[88px] mr-px flex flex-col gap-1.5">
              <PushButton disabled>删除(D)</PushButton>
              <PushButton>复制(L)</PushButton>
              <PushButton disabled>向上(U)</PushButton>
              <PushButton disabled>向下(O)</PushButton>
            </div>
          </div>
          <div className="mt-[11px] flex items-start leading-[19px]">
            <label htmlFor="break" className="w-[145px]">截断样式位置(B):</label>
            <Combo id="break" value="每段扶手末端" w="w-[122px]" />
            <label htmlFor="angleN" className="ml-[73px] w-[54px]">角度(N):</label>
            <Field id="angleN" value="0.00°" />
            <label htmlFor="plen" className="ml-auto mr-1">样式长度:</label>
            <Field id="plen" value="1000.0" />
          </div>
          <div className="mt-[9px] flex items-start leading-[19px]">
            <label htmlFor="justify" className="w-[70px]">对齐(J):</label>
            <Combo id="justify" value="起点" w="w-[138px]" />
            <label htmlFor="excess" className="ml-[9px] w-[101px]">超出长度填充(E):</label>
            <Combo id="excess" value="无" w="w-[138px]" />
            <label htmlFor="spacing" className="ml-auto mr-1">间距(I):</label>
            <Field id="spacing" value="0.0" />
          </div>
        </fieldset>

        <div className={`${GROUP} mt-[11px] mr-1 h-[35px] pt-2 flex items-start leading-[19px]`}>
          <label className="w-[206px] flex items-center gap-[3px] whitespace-nowrap">
            <input type="checkbox" className="appearance-none w-[13px] h-[13px] border border-[#333] bg-white" />
            楼梯上每个踏板都使用栏杆(T)
          </label>
          <label htmlFor="perTread" className="w-[111px]">每踏板的栏杆数(R):</label>
          <Field id="perTread" value="1" />
          <label htmlFor="family" className="ml-auto mr-1">栏杆族(F):</label>
          <Combo id="family" value="栏杆 - 圆形 : 25mm" w="w-[138px] -mr-[3px]" disabled />
        </div>

        <fieldset className={`${GROUP} mt-0.5 pb-[3px] mr-1`}>
          <legend className="-ml-1.5 px-0.5 leading-4">支柱(S)</legend>
          <div className="pt-1.5"><PostTable /></div>
          <div className="mt-[9px] flex items-start leading-[19px]">
            <label htmlFor="corner" className="w-[145px]">转角支柱位置(C):</label>
            <Combo id="corner" value="每段扶手末端" w="w-[122px]" />
            <label htmlFor="angleG" className="ml-[73px] w-[54px]">角度(G):</label>
            <Field id="angleG" value="0.00°" />
          </div>
        </fieldset>

        <div className="mt-2.5 mr-[5px] flex gap-2">
          <PushButton className="mt-4 mr-auto">&lt;&lt; 预览(P)</PushButton>
          <PushButton primary>确定</PushButton>
          <PushButton>取消</PushButton>
          <PushButton>应用(A)</PushButton>
          <PushButton>帮助(H)</PushButton>
        </div>
        <svg width="8" height="8" viewBox="0 0 8 8" className="absolute right-0.5 bottom-0.5"><path d="M6 0h2v2H6zM3 3h2v2H3zM6 3h2v2H6zM0 6h2v2H0zM3 6h2v2H3zM6 6h2v2H6z" fill="#bdbdbd" /></svg>
      </div>
    </div>
  );
}

// ── Status bar ───────────────────────────────────────────────────────────────
function StatusBar() {
  return (
    <div className="h-6 bg-[#cbcbcb] flex items-center leading-[26px] text-[#222]">
      <span className="pl-px">就绪</span>
      <div className="ml-auto flex items-center">
        <Icon name="bino" className="text-[#8f8f8f] mr-2" />
        <div className="relative w-[204px]">
          <select aria-label="工作集" disabled className="appearance-none block w-full h-[18px] bg-white opacity-100"><option /></select>
          <span className="absolute right-1 top-1"><Chevron className="text-[#aaa]" /></span>
        </div>
        <Icon name="paintbrush" className="text-[#999] mx-2" />
        <span className="w-7 text-[#111]">:0</span>
        <svg width="42" height="18" viewBox="0 0 42 18" className="mr-2"><rect x="0" y="1" width="16" height="16" rx="1" fill="#a0a0a0" /><path d="M26 1h15v16H26z" fill="#a0a0a0" /><path d="M27 9h6M31 6l4 4-4 4" stroke="#fff" fill="none" /></svg>
        <div className="relative w-[204px]">
          <select aria-label="设计选项" disabled className="appearance-none block w-full h-[18px] pl-0.5 bg-white text-[#808080] leading-[18px] opacity-100"><option>主模型</option></select>
          <span className="absolute right-1 top-1"><Chevron className="text-[#aaa]" /></span>
        </div>
      </div>
      <div className="ml-[181px] mr-[72px] flex items-center gap-2.5">
        <svg width="16" height="16" viewBox="0 0 16 16" fill="#999"><path d="M0 3l4-2 4 2 4-2 4 2-2 4h-3l2 7H8l1-6-5 1-4-2z" /></svg>
        <svg width="16" height="16" viewBox="0 0 16 16" fill="#999"><path d="M0 11l9-10h5v11l-5 2z" /></svg>
        <svg width="16" height="16" viewBox="0 0 16 16" fill="#999"><path d="M2 1h9v6l5 7h-4l-3-4H1l3-3z" /></svg>
        <svg width="16" height="16" viewBox="0 0 16 16" fill="#999"><path d="M0 4h7l6-3 2 3-4 4 3 3-3 4H0z" /></svg>
        <svg width="16" height="16" viewBox="0 0 16 16" fill="none" stroke="#999"><path d="M5 0v10M0 5h10M2 2l6 6M8 7l7 3-3 1 3 4" /></svg>
        <svg width="14" height="14" viewBox="0 0 14 14"><circle cx="7" cy="7" r="5" fill="none" stroke="#a4a4a4" strokeWidth="3" strokeDasharray="3 1" /></svg>
        <span className="flex items-center">
          <svg width="16" height="15" viewBox="0 0 16 15"><path d="M0 1h16l-6 7v6l-4-1V8z" fill="#7e8791" stroke="#444" /></svg>
          :1
        </span>
      </div>
    </div>
  );
}

// ── Windows taskbar ──────────────────────────────────────────────────────────
const APPS = [
  { name: '百度网盘', art: <><rect width="24" height="24" rx="4" fill="#fff" /><circle cx="12" cy="8" r="3.500" fill="none" stroke="#2a7bf0" strokeWidth="2" /><circle cx="7.500" cy="14" r="3.500" fill="none" stroke="#31b0e8" strokeWidth="2" /><circle cx="16.500" cy="14" r="3.500" fill="none" stroke="#ef4054" strokeWidth="2" /><path d="M8 23h4" stroke="#2a7bf0" strokeWidth="2" /><path d="M12 23h4" stroke="#ef4054" strokeWidth="2" /></> },
  { name: 'WPS', art: <><rect width="23" height="24" rx="3" fill="#3a72e0" /><text x="2" y="14" fontSize="10" fontWeight="700" fill="#fff">工作</text><rect x="13" y="11" width="11" height="13" rx="2" fill="#ee7b52" /><path d="M16 22v-8h3.500a2 2 0 0 1 0 4.500H16" fill="none" stroke="#fff" strokeWidth="1.500" /></>, split: true },
  { name: '文件资源管理器', art: <><path d="M1 3h8l2 2h12v16H1z" fill="#e8a823" /><path d="M1 8h22v13H1z" fill="#ffd45e" /><path d="M4 21v-8h16v8h-4v-4H8v4z" fill="#3f9fdc" /></>, split: true },
  { name: '播放器', art: <><rect width="24" height="24" rx="4" fill="#3f97f8" /><path d="M5 4l15 8-15 8z" fill="#fff" /><path d="M8 9l6 3-6 3z" fill="#9ccbff" /></> },
  { name: '安全中心', art: <path d="M12 3c3 2 6 2 8 2v7c0 5-4 8-8 10-4-2-8-5-8-10V5c2 0 5 0 8-2zM12 3v19M4 12h16" fill="#fff" stroke="#1a2642" /> },
  { name: 'TeamViewer', art: <><rect width="24" height="24" rx="2" fill="#0e73d0" /><circle cx="12" cy="12" r="9.500" fill="#fff" /><path d="M4 12l5-4v3h6V8l5 4-5 4v-3H9v3z" fill="#0e73d0" /></> },
  { name: 'Revit', active: true },
  { name: '微信', art: <><ellipse cx="9.500" cy="9.500" rx="8.500" ry="7.500" fill="#75cf3e" /><path d="M4 14v5l4-3z" fill="#75cf3e" /><ellipse cx="17" cy="15.500" rx="6.500" ry="5.500" fill="#f3f3f3" /><path d="M20 19v3l-4-2z" fill="#f3f3f3" /><path d="M6 7h1.500v1.500H6zM12 7h1.500v1.500H12zM14.500 13.500H16V15h-1.500zM19 13.500h1.500V15H19z" fill="#3b5a2c" /></> },
];

function Taskbar() {
  return (
    <footer className="h-10 bg-[#1a2642] flex items-stretch justify-between text-white">
      <div className="flex">
        <button aria-label="开始" className="w-[50px] pr-0.5 flex items-center justify-center">
          <svg width="16" height="16" viewBox="0 0 16 16" fill="#fff"><path d="M0 2l7-1v6.500H0zM8 1l8-1v7.500H8zM0 8.500h7V15l-7-1zM8 8.500h8V16l-8-1z" /></svg>
        </button>
        {APPS.map(a => (
          <button key={a.name} aria-label={a.name} className={`w-[49px] relative flex items-center justify-center ${a.active ? 'bg-[#48526b]' : ''}`}>
            {a.active
              ? <span className="w-6 h-6 bg-[#dbe7f5] flex items-center justify-center"><RevitLogo className="w-4 h-5" /></span>
              : <svg width="24" height="24" viewBox="0 0 24 24">{a.art}</svg>}
            <span className={`absolute bottom-0 h-0.5 bg-[#76b9ed] ${a.active ? 'inset-x-0' : 'inset-x-1'}`} />
            {a.split && <span className="absolute bottom-0 right-1 w-2 h-0.5 bg-[#4a7aa3]" />}
          </button>
        ))}
      </div>
      <div className="flex items-center">
        <svg width="12" height="8" viewBox="0 0 12 8" className="mr-2.5"><path d="M1 7l5-5 5 5" fill="none" stroke="#fff" strokeWidth="1.300" /></svg>
        <svg width="16" height="16" viewBox="0 0 16 16" fill="none" stroke="#fff" className="mr-2"><path d="M5 3.500h10.500v8H3.500V7M6 14.500h7M9.500 12v2M.5 1.500h4v4h-4zM2.500 5.500v4" /></svg>
        <svg width="17" height="16" viewBox="0 0 17 16" fill="none" stroke="#fff" className="mr-1.5"><path d="M.5 5.500h3l4-4v13l-4-4h-3zM9.500 5c1.500 2 1.500 4 0 6M11.500 3.500c2.500 3 2.500 6 0 9M13.500 2c3.500 4 3.500 8 0 12" /></svg>
        <span className="text-base mr-3.5">英</span>
        <span className="w-4 h-4 bg-white text-black text-sm leading-4 flex items-center justify-center mr-4">拼</span>
        <div className="w-[60px] text-center leading-5 mr-[18px]">
          <div>9:24</div>
          <div>2020/4/30</div>
        </div>
        <svg width="26" height="26" viewBox="0 0 26 26" className="mr-3">
          <path d="M1 4h16v13H7l-3 3v-3H1z" fill="#fff" /><path d="M4 7.500h10M4 10.500h10M4 13.500h6" stroke="#1a2642" />
          <circle cx="17" cy="17" r="7.500" fill="#3c4250" stroke="#aab" />
          <text x="14" y="21.500" fontSize="12" fill="#fff">2</text>
        </svg>
        <span className="w-[5px] h-full border-l border-[#5d6579]" />
      </div>
    </footer>
  );
}

export default function App() {
  return (
    <div className="relative h-screen flex flex-col overflow-hidden bg-[#eeeeee] text-xs text-black font-['Noto_Sans','Noto_Sans_CJK_SC',sans-serif]">
      <TitleBar />
      <TabRow />
      <Ribbon />
      <div className="h-7 pl-2 bg-[#e4efd7] border-b-2 border-[#c6c6c6] leading-[27px]">修改 | 栏杆扶手</div>
      <div className="flex-1 min-h-0 flex">
        <Properties />
        <ViewArea />
        <Browser />
      </div>
      <StatusBar />
      <Taskbar />
      <Dialog />
    </div>
  );
}
